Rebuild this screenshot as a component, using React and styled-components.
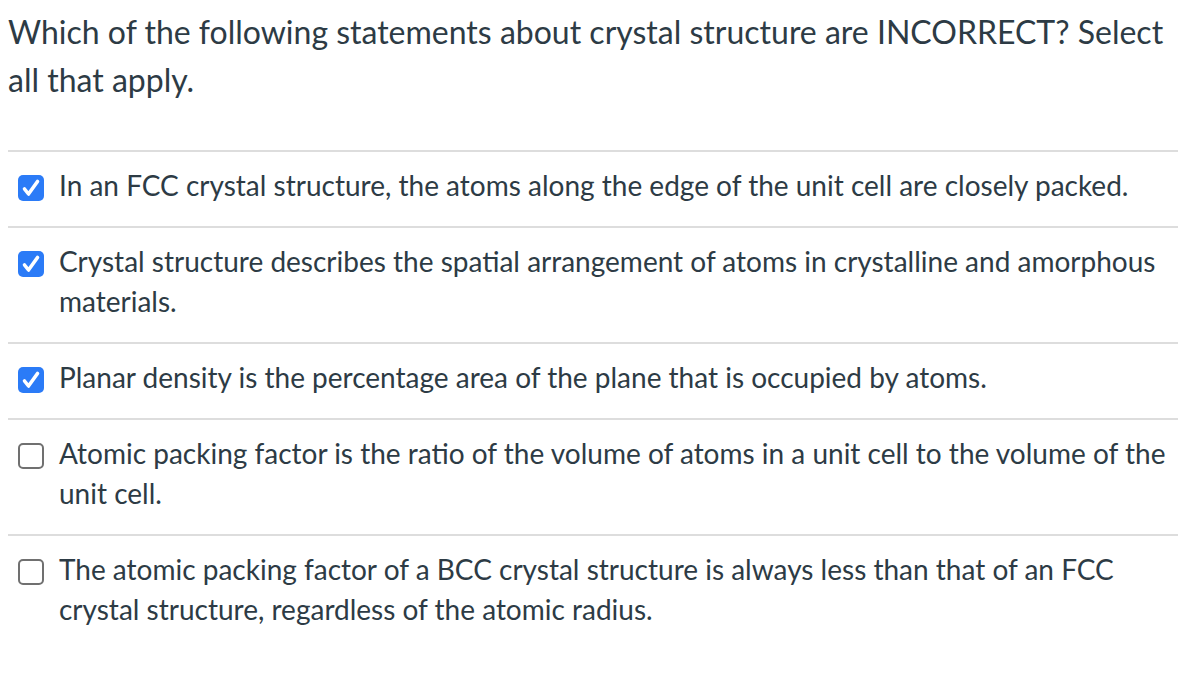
import React from "react";
import styled, { createGlobalStyle } from "styled-components";

const GlobalStyle = createGlobalStyle`
  body {
    margin: 8px;
    background: #ffffff;
    font-family: Lato, "Liberation Sans", sans-serif;
    color: #2d3b45;
  }
`;

const Question = styled.p`
  margin: 0;
  font-size: 32px;
  line-height: 48px;
`;

const Answers = styled.ul`
  list-style: none;
  margin: 46px 0 0;
  padding: 0;
  width: 1170px;
`;

const Answer = styled.li`
  display: flex;
  align-items: flex-start;
  gap: 15px;
  border-top: 2px solid #dddddd;
  padding: 13px 0 21px 10px;
  font-size: 28px;
  line-height: 40px;
`;

const Box = styled.span`
  flex: none;
  box-sizing: border-box;
  width: 26px;
  height: 26px;
  margin-top: 10px;
  border-radius: 5px;
  display: block;
  background: ${(p) => (p.checked ? "#2b7bf7" : "#ffffff")};
  border: ${(p) => (p.checked ? "none" : "2.5px solid #707070")};

  svg {
    display: block;
  }
`;

const Label = styled.span`
  flex: 1;
`;

const answers = [
  { text: "In an FCC crystal structure, the atoms along the edge of the unit cell are closely packed.", checked: true },
  { text: "Crystal structure describes the spatial arrangement of atoms in crystalline and amorphous materials.", checked: true },
  { text: "Planar density is the percentage area of the plane that is occupied by atoms.", checked: true },
  { text: "Atomic packing factor is the ratio of the volume of atoms in a unit cell to the volume of the unit cell.", checked: false },
  { text: "The atomic packing factor of a BCC crystal structure is always less than that of an FCC crystal structure, regardless of the atomic radius.", checked: false },
];

function Check() {
  return (
    <svg width="26" height="26" viewBox="0 0 26 26">
      <path d="M6.5 14 L10.5 19 L19.5 6.5" fill="none" stroke="#fff" strokeWidth="3.6" strokeLinecap="round" strokeLinejoin="round" />
    </svg>
  );
}

export default function App() {
  return (
    <>
      <GlobalStyle />
      <Question>
        Which of the following statements about crystal structure are INCORRECT? Select all that apply.
      </Question>
      <Answers>
        {answers.map((a, i) => (
          <Answer key={i}>
            <Box checked={a.checked}>{a.checked && <Check />}</Box>
            <Label>{a.text}</Label>
          </Answer>
        ))}
      </Answers>
    </>
  );
}
